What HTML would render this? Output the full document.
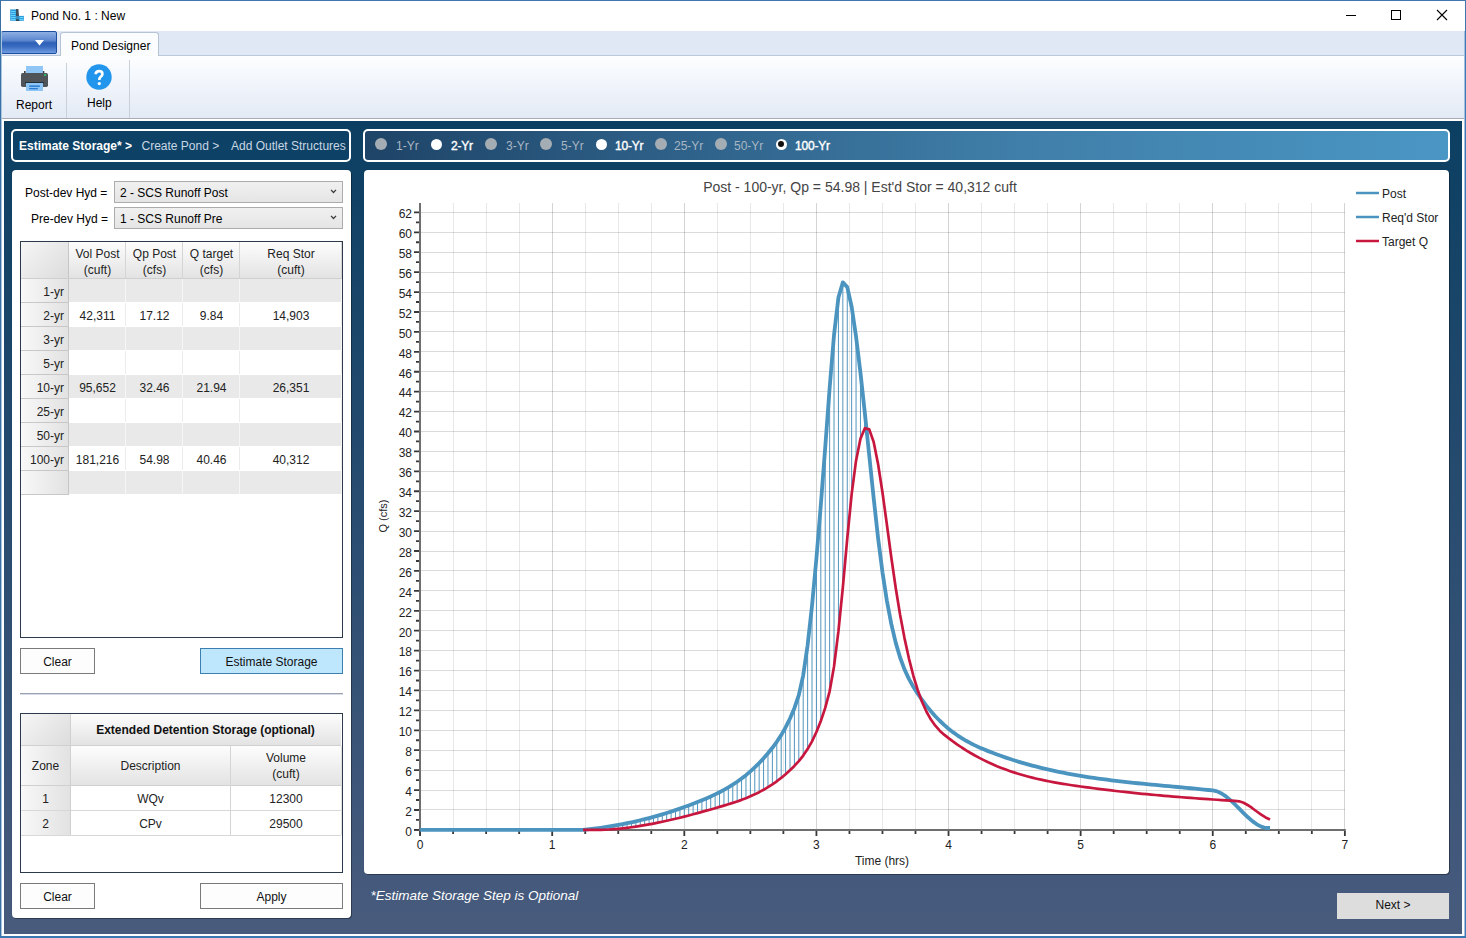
<!DOCTYPE html>
<html><head><meta charset="utf-8"><title>Pond Designer</title><style>
*{box-sizing:border-box;margin:0;padding:0}
html,body{width:1466px;height:938px;overflow:hidden;background:#fff;font-family:"Liberation Sans", sans-serif;font-size:12px;color:#000}
.a{position:absolute}
.t{position:absolute;white-space:pre;line-height:1}
</style></head>
<body>
<div class="a" style="left:0;top:0;width:1466px;height:938px;background:#fff"></div>
<svg class="a" style="left:8px;top:7px" width="18" height="16" viewBox="0 0 18 16"><rect x="2.2" y="2.4" width="5.8" height="11.4" fill="#2a9ad8"/><rect x="3" y="4" width="4.6" height="1.1" fill="#66d2ff"/><rect x="3" y="6" width="4.6" height="1.1" fill="#66d2ff"/><rect x="3" y="8" width="4.6" height="1.1" fill="#66d2ff"/><rect x="3" y="10" width="4.6" height="1.1" fill="#66d2ff"/><rect x="3" y="12" width="4.6" height="1.1" fill="#66d2ff"/><path d="M8 2H10.4L11 9V13.8H8Z" fill="#3b4e5c"/><rect x="8" y="9" width="3" height="3.6" fill="#3a8ab8"/><rect x="8" y="12.6" width="3.9" height="1.2" fill="#22384a"/><rect x="10.9" y="8.9" width="5" height="4.9" fill="#2a9ad8"/><rect x="11.5" y="10" width="4" height="1.1" fill="#66d2ff"/><rect x="11.5" y="12" width="4" height="1.1" fill="#66d2ff"/></svg>
<div class="t" style="left:31px;top:10px;font-size:12px;color:#000">Pond No. 1 : New</div>
<div class="a" style="left:1346px;top:15px;width:10px;height:1px;background:#000"></div>
<div class="a" style="left:1391px;top:10px;width:10px;height:10px;border:1px solid #000"></div>
<svg class="a" style="left:1436px;top:9px" width="12" height="12" viewBox="0 0 12 12"><path d="M1 1L11 11M11 1L1 11" stroke="#000" stroke-width="1.1"/></svg>
<div class="a" style="left:1px;top:31px;width:1464px;height:25px;background:#dfe8f4;border-bottom:1px solid #b9c9dd"></div>
<div class="a" style="left:1px;top:31px;width:56px;height:23px;border:1px solid #1d4f9c;border-radius:2px;background:linear-gradient(#8eb0e4 0%,#5d87cf 40%,#2c5fb6 52%,#3a6cc2 70%,#6f9be0 100%)"></div>
<svg class="a" style="left:35px;top:40px" width="9" height="6" viewBox="0 0 9 6"><path d="M0 0H9L4.5 5.5Z" fill="#fff"/></svg>
<div class="a" style="left:60px;top:32px;width:99px;height:25px;border:1px solid #b6c3d4;border-bottom:none;border-radius:3px 3px 0 0;background:#fafcfe"></div>
<div class="t" style="left:71px;top:40px;font-size:12px">Pond Designer</div>
<div class="a" style="left:1px;top:56px;width:1464px;height:63px;background:linear-gradient(#fdfeff 0%,#f1f5fb 45%,#e3eaf5 100%);border-bottom:1px solid #a9adb3"></div>
<div class="a" style="left:66px;top:63px;width:1px;height:55px;background:#c8d0da"></div>
<div class="a" style="left:129px;top:60px;width:1px;height:58px;background:#c8d0da"></div>
<svg class="a" style="left:15px;top:60px" width="40" height="35" viewBox="0 0 40 35"><rect x="11" y="6" width="17" height="7" fill="#8fc6f5"/><rect x="9" y="11" width="1.6" height="2.5" fill="#3a3f44"/><rect x="27.9" y="11" width="1.4" height="2.5" fill="#3a3f44"/><path d="M7.5 13H31.3Q33 13 33 14.8V25.2Q33 27 31.3 27H7.5Q6 27 6 25.2V14.8Q6 13 7.5 13Z" fill="#4f5458"/><rect x="29" y="14" width="2.2" height="2" fill="#2fb36a"/><rect x="10" y="22" width="19" height="1.2" fill="#22303c"/><rect x="11" y="23" width="17" height="8" fill="#8fc6f5"/><rect x="14.2" y="25.4" width="10.6" height="1.5" fill="#2a7ad0"/><rect x="14.2" y="28" width="8.6" height="1.3" fill="#2a7ad0"/></svg>
<div class="t" style="left:16px;top:99px;font-size:12px">Report</div>
<svg class="a" style="left:86px;top:64px" width="26" height="26" viewBox="0 0 26 26"><circle cx="13" cy="13" r="12.7" fill="#2295ec"/><path d="M9.7 10.3Q9.7 7.1 13.1 7.1Q16.4 7.1 16.4 9.9Q16.4 11.6 14.6 12.8Q13.3 13.7 13.3 15.6V16" stroke="#fff" stroke-width="2.7" fill="none"/><circle cx="13.3" cy="19.6" r="1.65" fill="#fff"/></svg>
<div class="t" style="left:87px;top:97px;font-size:12px">Help</div>
<div class="a" style="left:0;top:0;width:1466px;height:938px;border:1px solid #3f78b0;border-left:1px solid #3a70a4"></div>
<div class="a" style="left:1px;top:31px;width:1px;height:906px;background:#a6c6e2"></div>
<div class="a" style="left:1464px;top:31px;width:1px;height:906px;background:#9fc0de"></div>
<div class="a" style="left:0;top:936px;width:1466px;height:2px;background:#3a78b4"></div>
<div class="a" style="left:4px;top:121px;width:1458px;height:813px;background:linear-gradient(#0b3f62 0%,#284c70 48%,#485b7d 100%)"></div>
<div class="a" style="left:11px;top:129px;width:340px;height:33px;border:2px solid #fff;border-radius:5px;background:#0d4266"></div>
<div class="t" style="left:19px;top:140px;font-size:12px;font-weight:bold;color:#fff">Estimate Storage* &gt;</div>
<div class="t" style="left:141.5px;top:140px;font-size:12px;color:#c9d6e3">Create Pond &gt;</div>
<div class="t" style="left:231px;top:140px;font-size:12px;color:#c9d6e3">Add Outlet Structures</div>
<div class="a" style="left:363px;top:129px;width:1087px;height:33px;border:2px solid #fff;border-radius:5px;background:linear-gradient(90deg,#1e4467 0%,#2f628a 30%,#3f7ea8 60%,#4a96c4 100%)"></div>
<div class="a" style="left:375px;top:138px;width:12px;height:12px;border-radius:50%;background:#a4acb4"></div>
<div class="t" style="left:396px;top:140px;font-size:12px;color:#a9b6c3">1-Yr</div>
<div class="a" style="left:430.5px;top:138.5px;width:11px;height:11px;border-radius:50%;background:#fff"></div>
<div class="t" style="left:451px;top:140px;font-size:12px;color:#fff;-webkit-text-stroke:0.4px #fff;letter-spacing:-0.2px">2-Yr</div>
<div class="a" style="left:485px;top:138px;width:12px;height:12px;border-radius:50%;background:#a4acb4"></div>
<div class="t" style="left:506px;top:140px;font-size:12px;color:#a9b6c3">3-Yr</div>
<div class="a" style="left:540px;top:138px;width:12px;height:12px;border-radius:50%;background:#a4acb4"></div>
<div class="t" style="left:561px;top:140px;font-size:12px;color:#a9b6c3">5-Yr</div>
<div class="a" style="left:595.5px;top:138.5px;width:11px;height:11px;border-radius:50%;background:#fff"></div>
<div class="t" style="left:615px;top:140px;font-size:12px;color:#fff;-webkit-text-stroke:0.4px #fff;letter-spacing:-0.2px">10-Yr</div>
<div class="a" style="left:655px;top:138px;width:12px;height:12px;border-radius:50%;background:#a4acb4"></div>
<div class="t" style="left:674px;top:140px;font-size:12px;color:#a9b6c3">25-Yr</div>
<div class="a" style="left:715px;top:138px;width:12px;height:12px;border-radius:50%;background:#a4acb4"></div>
<div class="t" style="left:734px;top:140px;font-size:12px;color:#a9b6c3">50-Yr</div>
<div class="a" style="left:775.5px;top:138.5px;width:11px;height:11px;border-radius:50%;background:#fff"></div>
<div class="a" style="left:778px;top:141px;width:6px;height:6px;border-radius:50%;background:#111"></div>
<div class="t" style="left:795px;top:140px;font-size:12px;color:#fff;-webkit-text-stroke:0.4px #fff;letter-spacing:-0.2px">100-Yr</div>
<div class="a" style="left:12px;top:170px;width:339px;height:748px;background:#fff;border-radius:4px;box-shadow:1px 1px 0 0 rgba(0,0,0,0.33),0 0 1px 0 rgba(0,0,0,0.3)"></div>
<div class="a" style="left:364px;top:170px;width:1085px;height:704px;background:#fff;border-radius:4px;box-shadow:1px 1px 0 0 rgba(0,0,0,0.33),0 0 1px 0 rgba(0,0,0,0.3)"></div>
<div class="t" style="left:25px;top:187px;font-size:12px">Post-dev Hyd =</div>
<div class="t" style="left:31px;top:213px;font-size:12px">Pre-dev Hyd =</div>
<div class="a" style="left:114px;top:181px;width:229px;height:22px;border:1px solid #acacac;background:linear-gradient(#f0f0f0,#e5e5e5)"></div>
<div class="t" style="left:120px;top:187px;font-size:12px">2 - SCS Runoff Post</div>
<svg class="a" style="left:330px;top:189px" width="7" height="5" viewBox="0 0 7 5"><path d="M1 0.9L3.5 3.5L6 0.9" stroke="#3a3a3a" stroke-width="1.25" fill="none"/></svg>
<div class="a" style="left:114px;top:207px;width:229px;height:22px;border:1px solid #acacac;background:linear-gradient(#f0f0f0,#e5e5e5)"></div>
<div class="t" style="left:120px;top:213px;font-size:12px">1 - SCS Runoff Pre</div>
<svg class="a" style="left:330px;top:215px" width="7" height="5" viewBox="0 0 7 5"><path d="M1 0.9L3.5 3.5L6 0.9" stroke="#3a3a3a" stroke-width="1.25" fill="none"/></svg>
<div class="a" style="left:20px;top:241px;width:323px;height:397px;border:1px solid #2c3b4b;background:#fff"></div>
<div class="a" style="left:21px;top:242px;width:47px;height:36px;background:linear-gradient(135deg,#f6f6f6,#dcdcdc)"></div>
<div class="a" style="left:68px;top:242px;width:1px;height:253px;background:#c6c6c6"></div>
<div class="a" style="left:69px;top:242px;width:57px;height:36px;background:linear-gradient(#fdfdfd,#e3e3e3);border-right:1px solid #d5d5d5"></div>
<div class="a" style="left:69px;top:246px;width:57px;text-align:center;line-height:16px;font-size:12px;color:#222">Vol Post<br>(cuft)</div>
<div class="a" style="left:126px;top:242px;width:57px;height:36px;background:linear-gradient(#fdfdfd,#e3e3e3);border-right:1px solid #d5d5d5"></div>
<div class="a" style="left:126px;top:246px;width:57px;text-align:center;line-height:16px;font-size:12px;color:#222">Qp Post<br>(cfs)</div>
<div class="a" style="left:183px;top:242px;width:57px;height:36px;background:linear-gradient(#fdfdfd,#e3e3e3);border-right:1px solid #d5d5d5"></div>
<div class="a" style="left:183px;top:246px;width:57px;text-align:center;line-height:16px;font-size:12px;color:#222">Q target<br>(cfs)</div>
<div class="a" style="left:240px;top:242px;width:102px;height:36px;background:linear-gradient(#fdfdfd,#e3e3e3);border-right:1px solid #d5d5d5"></div>
<div class="a" style="left:240px;top:246px;width:102px;text-align:center;line-height:16px;font-size:12px;color:#222">Req Stor<br>(cuft)</div>
<div class="a" style="left:21px;top:278px;width:321px;height:1px;background:#cfcfcf"></div>
<div class="a" style="left:21px;top:279px;width:47px;height:23px;background:linear-gradient(90deg,#f8f8f8,#e2e2e2)"></div>
<div class="a" style="left:21px;top:302px;width:47px;height:1px;background:#c8c8c8"></div>
<div class="t" style="left:21px;top:286px;width:43px;text-align:right;font-size:12px;color:#222">1-yr</div>
<div class="a" style="left:69px;top:279px;width:57px;height:23px;background:#e9e9e9;border-right:1px solid #f6f6f6"></div>
<div class="a" style="left:126px;top:279px;width:57px;height:23px;background:#e9e9e9;border-right:1px solid #f6f6f6"></div>
<div class="a" style="left:183px;top:279px;width:57px;height:23px;background:#e9e9e9;border-right:1px solid #f6f6f6"></div>
<div class="a" style="left:240px;top:279px;width:102px;height:23px;background:#e9e9e9;border-right:1px solid #f6f6f6"></div>
<div class="a" style="left:21px;top:303px;width:47px;height:23px;background:linear-gradient(90deg,#f8f8f8,#e2e2e2)"></div>
<div class="a" style="left:21px;top:326px;width:47px;height:1px;background:#c8c8c8"></div>
<div class="t" style="left:21px;top:310px;width:43px;text-align:right;font-size:12px;color:#222">2-yr</div>
<div class="a" style="left:69px;top:303px;width:57px;height:23px;background:#ffffff;border-right:1px solid #ececec"></div>
<div class="t" style="left:69px;top:310px;width:57px;text-align:center;font-size:12px;color:#222">42,311</div>
<div class="a" style="left:126px;top:303px;width:57px;height:23px;background:#ffffff;border-right:1px solid #ececec"></div>
<div class="t" style="left:126px;top:310px;width:57px;text-align:center;font-size:12px;color:#222">17.12</div>
<div class="a" style="left:183px;top:303px;width:57px;height:23px;background:#ffffff;border-right:1px solid #ececec"></div>
<div class="t" style="left:183px;top:310px;width:57px;text-align:center;font-size:12px;color:#222">9.84</div>
<div class="a" style="left:240px;top:303px;width:102px;height:23px;background:#ffffff;border-right:1px solid #ececec"></div>
<div class="t" style="left:240px;top:310px;width:102px;text-align:center;font-size:12px;color:#222">14,903</div>
<div class="a" style="left:21px;top:327px;width:47px;height:23px;background:linear-gradient(90deg,#f8f8f8,#e2e2e2)"></div>
<div class="a" style="left:21px;top:350px;width:47px;height:1px;background:#c8c8c8"></div>
<div class="t" style="left:21px;top:334px;width:43px;text-align:right;font-size:12px;color:#222">3-yr</div>
<div class="a" style="left:69px;top:327px;width:57px;height:23px;background:#e9e9e9;border-right:1px solid #f6f6f6"></div>
<div class="a" style="left:126px;top:327px;width:57px;height:23px;background:#e9e9e9;border-right:1px solid #f6f6f6"></div>
<div class="a" style="left:183px;top:327px;width:57px;height:23px;background:#e9e9e9;border-right:1px solid #f6f6f6"></div>
<div class="a" style="left:240px;top:327px;width:102px;height:23px;background:#e9e9e9;border-right:1px solid #f6f6f6"></div>
<div class="a" style="left:21px;top:351px;width:47px;height:23px;background:linear-gradient(90deg,#f8f8f8,#e2e2e2)"></div>
<div class="a" style="left:21px;top:374px;width:47px;height:1px;background:#c8c8c8"></div>
<div class="t" style="left:21px;top:358px;width:43px;text-align:right;font-size:12px;color:#222">5-yr</div>
<div class="a" style="left:69px;top:351px;width:57px;height:23px;background:#ffffff;border-right:1px solid #ececec"></div>
<div class="a" style="left:126px;top:351px;width:57px;height:23px;background:#ffffff;border-right:1px solid #ececec"></div>
<div class="a" style="left:183px;top:351px;width:57px;height:23px;background:#ffffff;border-right:1px solid #ececec"></div>
<div class="a" style="left:240px;top:351px;width:102px;height:23px;background:#ffffff;border-right:1px solid #ececec"></div>
<div class="a" style="left:21px;top:375px;width:47px;height:23px;background:linear-gradient(90deg,#f8f8f8,#e2e2e2)"></div>
<div class="a" style="left:21px;top:398px;width:47px;height:1px;background:#c8c8c8"></div>
<div class="t" style="left:21px;top:382px;width:43px;text-align:right;font-size:12px;color:#222">10-yr</div>
<div class="a" style="left:69px;top:375px;width:57px;height:23px;background:#e9e9e9;border-right:1px solid #f6f6f6"></div>
<div class="t" style="left:69px;top:382px;width:57px;text-align:center;font-size:12px;color:#222">95,652</div>
<div class="a" style="left:126px;top:375px;width:57px;height:23px;background:#e9e9e9;border-right:1px solid #f6f6f6"></div>
<div class="t" style="left:126px;top:382px;width:57px;text-align:center;font-size:12px;color:#222">32.46</div>
<div class="a" style="left:183px;top:375px;width:57px;height:23px;background:#e9e9e9;border-right:1px solid #f6f6f6"></div>
<div class="t" style="left:183px;top:382px;width:57px;text-align:center;font-size:12px;color:#222">21.94</div>
<div class="a" style="left:240px;top:375px;width:102px;height:23px;background:#e9e9e9;border-right:1px solid #f6f6f6"></div>
<div class="t" style="left:240px;top:382px;width:102px;text-align:center;font-size:12px;color:#222">26,351</div>
<div class="a" style="left:21px;top:399px;width:47px;height:23px;background:linear-gradient(90deg,#f8f8f8,#e2e2e2)"></div>
<div class="a" style="left:21px;top:422px;width:47px;height:1px;background:#c8c8c8"></div>
<div class="t" style="left:21px;top:406px;width:43px;text-align:right;font-size:12px;color:#222">25-yr</div>
<div class="a" style="left:69px;top:399px;width:57px;height:23px;background:#ffffff;border-right:1px solid #ececec"></div>
<div class="a" style="left:126px;top:399px;width:57px;height:23px;background:#ffffff;border-right:1px solid #ececec"></div>
<div class="a" style="left:183px;top:399px;width:57px;height:23px;background:#ffffff;border-right:1px solid #ececec"></div>
<div class="a" style="left:240px;top:399px;width:102px;height:23px;background:#ffffff;border-right:1px solid #ececec"></div>
<div class="a" style="left:21px;top:423px;width:47px;height:23px;background:linear-gradient(90deg,#f8f8f8,#e2e2e2)"></div>
<div class="a" style="left:21px;top:446px;width:47px;height:1px;background:#c8c8c8"></div>
<div class="t" style="left:21px;top:430px;width:43px;text-align:right;font-size:12px;color:#222">50-yr</div>
<div class="a" style="left:69px;top:423px;width:57px;height:23px;background:#e9e9e9;border-right:1px solid #f6f6f6"></div>
<div class="a" style="left:126px;top:423px;width:57px;height:23px;background:#e9e9e9;border-right:1px solid #f6f6f6"></div>
<div class="a" style="left:183px;top:423px;width:57px;height:23px;background:#e9e9e9;border-right:1px solid #f6f6f6"></div>
<div class="a" style="left:240px;top:423px;width:102px;height:23px;background:#e9e9e9;border-right:1px solid #f6f6f6"></div>
<div class="a" style="left:21px;top:447px;width:47px;height:23px;background:linear-gradient(90deg,#f8f8f8,#e2e2e2)"></div>
<div class="a" style="left:21px;top:470px;width:47px;height:1px;background:#c8c8c8"></div>
<div class="t" style="left:21px;top:454px;width:43px;text-align:right;font-size:12px;color:#222">100-yr</div>
<div class="a" style="left:69px;top:447px;width:57px;height:23px;background:#ffffff;border-right:1px solid #ececec"></div>
<div class="t" style="left:69px;top:454px;width:57px;text-align:center;font-size:12px;color:#222">181,216</div>
<div class="a" style="left:126px;top:447px;width:57px;height:23px;background:#ffffff;border-right:1px solid #ececec"></div>
<div class="t" style="left:126px;top:454px;width:57px;text-align:center;font-size:12px;color:#222">54.98</div>
<div class="a" style="left:183px;top:447px;width:57px;height:23px;background:#ffffff;border-right:1px solid #ececec"></div>
<div class="t" style="left:183px;top:454px;width:57px;text-align:center;font-size:12px;color:#222">40.46</div>
<div class="a" style="left:240px;top:447px;width:102px;height:23px;background:#ffffff;border-right:1px solid #ececec"></div>
<div class="t" style="left:240px;top:454px;width:102px;text-align:center;font-size:12px;color:#222">40,312</div>
<div class="a" style="left:21px;top:471px;width:47px;height:23px;background:linear-gradient(90deg,#f8f8f8,#e2e2e2)"></div>
<div class="a" style="left:21px;top:494px;width:47px;height:1px;background:#c8c8c8"></div>
<div class="a" style="left:69px;top:471px;width:57px;height:23px;background:#e9e9e9;border-right:1px solid #f6f6f6"></div>
<div class="a" style="left:126px;top:471px;width:57px;height:23px;background:#e9e9e9;border-right:1px solid #f6f6f6"></div>
<div class="a" style="left:183px;top:471px;width:57px;height:23px;background:#e9e9e9;border-right:1px solid #f6f6f6"></div>
<div class="a" style="left:240px;top:471px;width:102px;height:23px;background:#e9e9e9;border-right:1px solid #f6f6f6"></div>
<div class="a" style="left:20px;top:648px;width:75px;height:26px;border:1px solid #7a7a7a;background:#fdfdfd"></div>
<div class="t" style="left:20px;top:656px;width:75px;text-align:center;font-size:12px;color:#111">Clear</div>
<div class="a" style="left:200px;top:648px;width:143px;height:26px;border:1px solid #3c7fb1;background:#bee6fd"></div>
<div class="t" style="left:200px;top:656px;width:143px;text-align:center;font-size:12px;color:#111">Estimate Storage</div>
<div class="a" style="left:20px;top:693px;width:323px;height:1px;background:#9ba1b0"></div>
<div class="a" style="left:20px;top:694px;width:323px;height:1px;background:#d9dde5"></div>
<div class="a" style="left:20px;top:713px;width:323px;height:160px;border:1px solid #2c3b4b;background:#fff"></div>
<div class="a" style="left:21px;top:714px;width:49px;height:31px;background:linear-gradient(135deg,#f6f6f6,#dcdcdc)"></div>
<div class="a" style="left:71px;top:714px;width:270px;height:31px;background:linear-gradient(#fdfdfd,#e3e3e3)"></div>
<div class="t" style="left:70px;top:724px;width:271px;text-align:center;font-size:12px;font-weight:bold;color:#111">Extended Detention Storage (optional)</div>
<div class="a" style="left:21px;top:745px;width:320px;height:1px;background:#d0d0d0"></div>
<div class="a" style="left:21px;top:746px;width:49px;height:39px;background:linear-gradient(90deg,#f8f8f8,#e2e2e2)"></div>
<div class="t" style="left:21px;top:760px;width:49px;text-align:center;font-size:12px;color:#222">Zone</div>
<div class="a" style="left:71px;top:746px;width:159px;height:39px;background:linear-gradient(#fdfdfd,#e3e3e3)"></div>
<div class="t" style="left:71px;top:760px;width:159px;text-align:center;font-size:12px;color:#222">Description</div>
<div class="a" style="left:231px;top:746px;width:110px;height:39px;background:linear-gradient(#fdfdfd,#e3e3e3)"></div>
<div class="a" style="left:231px;top:750px;width:110px;text-align:center;line-height:16px;font-size:12px;color:#222">Volume<br>(cuft)</div>
<div class="a" style="left:21px;top:785px;width:320px;height:1px;background:#d0d0d0"></div>
<div class="a" style="left:21px;top:786px;width:49px;height:24px;background:linear-gradient(90deg,#f8f8f8,#e2e2e2)"></div>
<div class="t" style="left:21px;top:793px;width:49px;text-align:center;font-size:12px;color:#222">1</div>
<div class="t" style="left:71px;top:793px;width:159px;text-align:center;font-size:12px;color:#222">WQv</div>
<div class="t" style="left:231px;top:793px;width:110px;text-align:center;font-size:12px;color:#222">12300</div>
<div class="a" style="left:21px;top:810px;width:320px;height:1px;background:#d8d8d8"></div>
<div class="a" style="left:21px;top:811px;width:49px;height:24px;background:linear-gradient(90deg,#f8f8f8,#e2e2e2)"></div>
<div class="t" style="left:21px;top:818px;width:49px;text-align:center;font-size:12px;color:#222">2</div>
<div class="t" style="left:71px;top:818px;width:159px;text-align:center;font-size:12px;color:#222">CPv</div>
<div class="t" style="left:231px;top:818px;width:110px;text-align:center;font-size:12px;color:#222">29500</div>
<div class="a" style="left:21px;top:835px;width:320px;height:1px;background:#d8d8d8"></div>
<div class="a" style="left:70px;top:714px;width:1px;height:121px;background:#d0d0d0"></div>
<div class="a" style="left:230px;top:746px;width:1px;height:89px;background:#d4d4d4"></div>
<div class="a" style="left:341px;top:746px;width:1px;height:89px;background:#e0e0e0"></div>
<div class="a" style="left:20px;top:883px;width:75px;height:26px;border:1px solid #7a7a7a;background:#fdfdfd"></div>
<div class="t" style="left:20px;top:891px;width:75px;text-align:center;font-size:12px;color:#111">Clear</div>
<div class="a" style="left:200px;top:883px;width:143px;height:26px;border:1px solid #7a7a7a;background:#fdfdfd"></div>
<div class="t" style="left:200px;top:891px;width:143px;text-align:center;font-size:12px;color:#111">Apply</div>
<svg class="a" style="left:0;top:0" width="1466" height="938" viewBox="0 0 1466 938">
<path d="M453.50,203V830 M486.50,203V830 M519.50,203V830 M585.50,203V830 M618.50,203V830 M651.50,203V830 M717.50,203V830 M750.50,203V830 M783.50,203V830 M849.50,203V830 M882.50,203V830 M915.50,203V830 M981.50,203V830 M1014.50,203V830 M1047.50,203V830 M1113.50,203V830 M1146.50,203V830 M1179.50,203V830 M1245.50,203V830 M1278.50,203V830 M1311.50,203V830" stroke="#000" stroke-opacity="0.09" stroke-width="1" fill="none"/>
<path d="M420,809.50H1344.86 M420,790.50H1344.86 M420,770.50H1344.86 M420,750.50H1344.86 M420,730.50H1344.86 M420,710.50H1344.86 M420,690.50H1344.86 M420,670.50H1344.86 M420,650.50H1344.86 M420,630.50H1344.86 M420,610.50H1344.86 M420,590.50H1344.86 M420,570.50H1344.86 M420,551.50H1344.86 M420,531.50H1344.86 M420,511.50H1344.86 M420,491.50H1344.86 M420,471.50H1344.86 M420,451.50H1344.86 M420,431.50H1344.86 M420,411.50H1344.86 M420,391.50H1344.86 M420,371.50H1344.86 M420,351.50H1344.86 M420,331.50H1344.86 M420,311.50H1344.86 M420,292.50H1344.86 M420,272.50H1344.86 M420,252.50H1344.86 M420,232.50H1344.86 M420,212.50H1344.86" stroke="#000" stroke-opacity="0.14" stroke-width="1" fill="none"/>
<path d="M552.50,203V830 M684.50,203V830 M816.50,203V830 M948.50,203V830 M1080.50,203V830 M1212.50,203V830 M1344.50,203V830" stroke="#000" stroke-opacity="0.17" stroke-width="1" fill="none"/>
<path d="M420,203V835 M414,830H1345.86" stroke="#6e6e6e" stroke-width="2" fill="none"/>
<path d="M414,829.90H419 M416,819.94H419 M414,809.98H419 M416,800.02H419 M414,790.06H419 M416,780.10H419 M414,770.14H419 M416,760.18H419 M414,750.22H419 M416,740.26H419 M414,730.30H419 M416,720.34H419 M414,710.38H419 M416,700.42H419 M414,690.46H419 M416,680.50H419 M414,670.54H419 M416,660.58H419 M414,650.62H419 M416,640.66H419 M414,630.70H419 M416,620.74H419 M414,610.78H419 M416,600.82H419 M414,590.86H419 M416,580.90H419 M414,570.94H419 M416,560.98H419 M414,551.02H419 M416,541.06H419 M414,531.10H419 M416,521.14H419 M414,511.18H419 M416,501.22H419 M414,491.26H419 M416,481.30H419 M414,471.34H419 M416,461.38H419 M414,451.42H419 M416,441.46H419 M414,431.50H419 M416,421.54H419 M414,411.58H419 M416,401.62H419 M414,391.66H419 M416,381.70H419 M414,371.74H419 M416,361.78H419 M414,351.82H419 M416,341.86H419 M414,331.90H419 M416,321.94H419 M414,311.98H419 M416,302.02H419 M414,292.06H419 M416,282.10H419 M414,272.14H419 M416,262.18H419 M414,252.22H419 M416,242.26H419 M414,232.30H419 M416,222.34H419 M414,212.38H419 M420.09,831V836 M453.12,831V834 M486.14,831V834 M519.17,831V834 M552.20,831V836 M585.23,831V834 M618.25,831V834 M651.28,831V834 M684.31,831V836 M717.34,831V834 M750.37,831V834 M783.39,831V834 M816.42,831V836 M849.45,831V834 M882.48,831V834 M915.50,831V834 M948.53,831V836 M981.56,831V834 M1014.59,831V834 M1047.61,831V834 M1080.64,831V836 M1113.67,831V834 M1146.69,831V834 M1179.72,831V834 M1212.75,831V836 M1245.78,831V834 M1278.81,831V834 M1311.83,831V834 M1344.86,831V836" stroke="#383838" stroke-width="1.8" fill="none"/>
<path d="M609.45,826.45V829.51 M613.85,825.71V829.19 M618.25,824.93V828.80 M622.66,824.09V828.35 M627.06,823.21V827.83 M631.47,822.28V827.26 M635.87,821.30V826.63 M640.27,820.26V825.94 M644.68,819.18V825.20 M649.08,818.04V824.41 M653.48,816.86V823.58 M657.89,815.62V822.69 M662.29,814.32V821.77 M666.70,812.98V820.80 M671.10,811.58V819.80 M675.50,810.12V818.76 M679.91,808.62V817.69 M684.31,807.05V816.58 M688.71,805.43V815.45 M693.12,803.76V814.29 M697.52,802.02V813.10 M701.92,800.23V811.90 M706.33,798.38V810.67 M710.73,796.44V809.43 M715.14,794.39V808.18 M719.54,792.21V806.91 M723.94,789.87V805.62 M728.35,787.36V804.29 M732.75,784.66V802.90 M737.15,781.73V801.43 M741.56,778.57V799.86 M745.96,775.14V798.16 M750.37,771.42V796.33 M754.77,767.40V794.34 M759.17,763.04V792.17 M763.58,758.34V789.80 M767.98,753.26V787.21 M772.38,747.79V784.38 M776.79,741.81V781.29 M781.19,735.09V777.93 M785.59,727.41V774.26 M790.00,718.51V770.27 M794.40,708.17V765.95 M798.81,695.11V761.15 M803.21,675.29V755.61 M807.61,645.25V749.09 M812.02,605.68V741.32 M816.42,558.35V732.04 M820.82,505.00V720.98 M825.23,447.40V707.89 M829.63,388.15V691.32 M834.03,334.96V666.49 M838.44,297.44V631.20 M842.84,282.39V587.44 M847.25,287.10V538.70 M851.65,306.76V494.18 M856.05,336.62V460.65 M860.46,372.84V438.65 M864.86,413.21V428.22" stroke="#4a8fbb" stroke-width="1" fill="none" opacity="0.95"/>
<path d="M420.09,829.90 L424.49,829.90 L428.90,829.90 L433.30,829.90 L437.70,829.90 L442.11,829.90 L446.51,829.90 L450.92,829.90 L455.32,829.90 L459.72,829.90 L464.13,829.90 L468.53,829.90 L472.93,829.90 L477.34,829.90 L481.74,829.90 L486.14,829.90 L490.55,829.90 L494.95,829.90 L499.36,829.90 L503.76,829.90 L508.16,829.90 L512.57,829.90 L516.97,829.90 L521.37,829.90 L525.78,829.90 L530.18,829.90 L534.59,829.90 L538.99,829.90 L543.39,829.90 L547.80,829.90 L552.20,829.90 L556.60,829.90 L561.01,829.90 L565.41,829.90 L569.81,829.90 L574.22,829.90 L578.62,829.90 L583.03,829.89 L587.43,829.43 L591.83,828.93 L596.24,828.38 L600.64,827.78 L605.04,827.14 L609.45,826.45 L613.85,825.71 L618.25,824.93 L622.66,824.09 L627.06,823.21 L631.47,822.28 L635.87,821.30 L640.27,820.26 L644.68,819.18 L649.08,818.04 L653.48,816.86 L657.89,815.62 L662.29,814.32 L666.70,812.98 L671.10,811.58 L675.50,810.12 L679.91,808.62 L684.31,807.05 L688.71,805.43 L693.12,803.76 L697.52,802.02 L701.92,800.23 L706.33,798.38 L710.73,796.44 L715.14,794.39 L719.54,792.21 L723.94,789.87 L728.35,787.36 L732.75,784.66 L737.15,781.73 L741.56,778.57 L745.96,775.14 L750.37,771.42 L754.77,767.40 L759.17,763.04 L763.58,758.34 L767.98,753.26 L772.38,747.79 L776.79,741.81 L781.19,735.09 L785.59,727.41 L790.00,718.51 L794.40,708.17 L798.81,695.11 L803.21,675.29 L807.61,645.25 L812.02,605.68 L816.42,558.35 L820.82,505.00 L825.23,447.40 L829.63,388.15 L834.03,334.96 L838.44,297.44 L842.84,282.39 L847.25,287.10 L851.65,306.76 L856.05,336.62 L860.46,372.84 L864.86,413.21 L869.26,455.65 L873.67,498.08 L878.07,537.95 L882.48,572.35 L886.88,600.74 L891.28,623.91 L895.69,642.61 L900.09,657.52 L904.49,669.38 L908.90,678.88 L913.30,686.73 L917.70,693.64 L922.11,700.01 L926.51,705.87 L930.92,711.27 L935.32,716.22 L939.72,720.75 L944.13,724.90 L948.53,728.69 L952.93,732.14 L957.34,735.29 L961.74,738.17 L966.14,740.79 L970.55,743.19 L974.95,745.40 L979.36,747.44 L983.76,749.34 L988.16,751.13 L992.57,752.84 L996.97,754.48 L1001.37,756.06 L1005.78,757.59 L1010.18,759.05 L1014.59,760.46 L1018.99,761.81 L1023.39,763.11 L1027.80,764.36 L1032.20,765.56 L1036.60,766.71 L1041.01,767.81 L1045.41,768.86 L1049.81,769.88 L1054.22,770.85 L1058.62,771.78 L1063.03,772.67 L1067.43,773.52 L1071.83,774.33 L1076.24,775.11 L1080.64,775.86 L1085.04,776.58 L1089.45,777.26 L1093.85,777.92 L1098.25,778.55 L1102.66,779.15 L1107.06,779.73 L1111.47,780.29 L1115.87,780.83 L1120.27,781.35 L1124.68,781.85 L1129.08,782.33 L1133.48,782.80 L1137.89,783.25 L1142.29,783.70 L1146.69,784.13 L1151.10,784.55 L1155.50,784.97 L1159.91,785.38 L1164.31,785.79 L1168.71,786.20 L1173.12,786.60 L1177.52,787.01 L1181.92,787.42 L1186.33,787.83 L1190.73,788.25 L1195.14,788.67 L1199.54,789.10 L1203.94,789.54 L1208.35,790.00 L1212.75,790.46 L1217.15,791.40 L1221.56,793.46 L1225.96,796.44 L1230.36,800.10 L1234.77,804.23 L1239.17,808.62 L1243.58,813.04 L1247.98,817.28 L1252.38,821.11 L1256.79,824.32 L1261.19,826.68 L1265.59,827.99 L1270.00,828.02" stroke="#4b94bf" stroke-width="3.8" fill="none" stroke-linejoin="round"/>
<path d="M583.03,829.90 L587.43,829.90 L591.83,829.90 L596.24,829.90 L600.64,829.90 L605.04,829.76 L609.45,829.51 L613.85,829.19 L618.25,828.80 L622.66,828.35 L627.06,827.83 L631.47,827.26 L635.87,826.63 L640.27,825.94 L644.68,825.20 L649.08,824.41 L653.48,823.58 L657.89,822.69 L662.29,821.77 L666.70,820.80 L671.10,819.80 L675.50,818.76 L679.91,817.69 L684.31,816.58 L688.71,815.45 L693.12,814.29 L697.52,813.10 L701.92,811.90 L706.33,810.67 L710.73,809.43 L715.14,808.18 L719.54,806.91 L723.94,805.62 L728.35,804.29 L732.75,802.90 L737.15,801.43 L741.56,799.86 L745.96,798.16 L750.37,796.33 L754.77,794.34 L759.17,792.17 L763.58,789.80 L767.98,787.21 L772.38,784.38 L776.79,781.29 L781.19,777.93 L785.59,774.26 L790.00,770.27 L794.40,765.95 L798.81,761.15 L803.21,755.61 L807.61,749.09 L812.02,741.32 L816.42,732.04 L820.82,720.98 L825.23,707.89 L829.63,691.32 L834.03,666.49 L838.44,631.20 L842.84,587.44 L847.25,538.70 L851.65,494.18 L856.05,460.65 L860.46,438.65 L864.86,428.22 L869.26,429.41 L873.67,442.02 L878.07,464.01 L882.48,492.48 L886.88,524.52 L891.28,557.23 L895.69,587.76 L900.09,614.66 L904.49,638.09 L908.90,658.30 L913.30,675.52 L917.70,690.01 L922.11,702.01 L926.51,711.77 L930.92,719.55 L935.32,725.72 L939.72,730.64 L944.13,734.66 L948.53,738.16 L952.93,741.43 L957.34,744.55 L961.74,747.50 L966.14,750.31 L970.55,752.97 L974.95,755.49 L979.36,757.88 L983.76,760.13 L988.16,762.26 L992.57,764.26 L996.97,766.15 L1001.37,767.92 L1005.78,769.59 L1010.18,771.15 L1014.59,772.62 L1018.99,774.00 L1023.39,775.29 L1027.80,776.50 L1032.20,777.63 L1036.60,778.69 L1041.01,779.69 L1045.41,780.62 L1049.81,781.50 L1054.22,782.32 L1058.62,783.10 L1063.03,783.84 L1067.43,784.54 L1071.83,785.22 L1076.24,785.87 L1080.64,786.49 L1085.04,787.10 L1089.45,787.70 L1093.85,788.28 L1098.25,788.85 L1102.66,789.40 L1107.06,789.94 L1111.47,790.46 L1115.87,790.98 L1120.27,791.47 L1124.68,791.96 L1129.08,792.43 L1133.48,792.90 L1137.89,793.35 L1142.29,793.79 L1146.69,794.21 L1151.10,794.63 L1155.50,795.03 L1159.91,795.43 L1164.31,795.82 L1168.71,796.19 L1173.12,796.56 L1177.52,796.92 L1181.92,797.26 L1186.33,797.60 L1190.73,797.94 L1195.14,798.26 L1199.54,798.57 L1203.94,798.88 L1208.35,799.19 L1212.75,799.48 L1217.15,799.77 L1221.56,800.05 L1225.96,800.33 L1230.36,800.60 L1234.77,800.86 L1239.17,801.29 L1243.58,802.78 L1247.98,805.21 L1252.38,808.22 L1256.79,811.49 L1261.19,814.67 L1265.59,817.42 L1270.00,819.41" stroke="#c8173f" stroke-width="2.7" fill="none" stroke-linejoin="round"/>
<text x="412" y="835.70" text-anchor="end" font-family="Liberation Sans" font-size="12" fill="#222">0</text>
<text x="412" y="815.78" text-anchor="end" font-family="Liberation Sans" font-size="12" fill="#222">2</text>
<text x="412" y="795.86" text-anchor="end" font-family="Liberation Sans" font-size="12" fill="#222">4</text>
<text x="412" y="775.94" text-anchor="end" font-family="Liberation Sans" font-size="12" fill="#222">6</text>
<text x="412" y="756.02" text-anchor="end" font-family="Liberation Sans" font-size="12" fill="#222">8</text>
<text x="412" y="736.10" text-anchor="end" font-family="Liberation Sans" font-size="12" fill="#222">10</text>
<text x="412" y="716.18" text-anchor="end" font-family="Liberation Sans" font-size="12" fill="#222">12</text>
<text x="412" y="696.26" text-anchor="end" font-family="Liberation Sans" font-size="12" fill="#222">14</text>
<text x="412" y="676.34" text-anchor="end" font-family="Liberation Sans" font-size="12" fill="#222">16</text>
<text x="412" y="656.42" text-anchor="end" font-family="Liberation Sans" font-size="12" fill="#222">18</text>
<text x="412" y="636.50" text-anchor="end" font-family="Liberation Sans" font-size="12" fill="#222">20</text>
<text x="412" y="616.58" text-anchor="end" font-family="Liberation Sans" font-size="12" fill="#222">22</text>
<text x="412" y="596.66" text-anchor="end" font-family="Liberation Sans" font-size="12" fill="#222">24</text>
<text x="412" y="576.74" text-anchor="end" font-family="Liberation Sans" font-size="12" fill="#222">26</text>
<text x="412" y="556.82" text-anchor="end" font-family="Liberation Sans" font-size="12" fill="#222">28</text>
<text x="412" y="536.90" text-anchor="end" font-family="Liberation Sans" font-size="12" fill="#222">30</text>
<text x="412" y="516.98" text-anchor="end" font-family="Liberation Sans" font-size="12" fill="#222">32</text>
<text x="412" y="497.06" text-anchor="end" font-family="Liberation Sans" font-size="12" fill="#222">34</text>
<text x="412" y="477.14" text-anchor="end" font-family="Liberation Sans" font-size="12" fill="#222">36</text>
<text x="412" y="457.22" text-anchor="end" font-family="Liberation Sans" font-size="12" fill="#222">38</text>
<text x="412" y="437.30" text-anchor="end" font-family="Liberation Sans" font-size="12" fill="#222">40</text>
<text x="412" y="417.38" text-anchor="end" font-family="Liberation Sans" font-size="12" fill="#222">42</text>
<text x="412" y="397.46" text-anchor="end" font-family="Liberation Sans" font-size="12" fill="#222">44</text>
<text x="412" y="377.54" text-anchor="end" font-family="Liberation Sans" font-size="12" fill="#222">46</text>
<text x="412" y="357.62" text-anchor="end" font-family="Liberation Sans" font-size="12" fill="#222">48</text>
<text x="412" y="337.70" text-anchor="end" font-family="Liberation Sans" font-size="12" fill="#222">50</text>
<text x="412" y="317.78" text-anchor="end" font-family="Liberation Sans" font-size="12" fill="#222">52</text>
<text x="412" y="297.86" text-anchor="end" font-family="Liberation Sans" font-size="12" fill="#222">54</text>
<text x="412" y="277.94" text-anchor="end" font-family="Liberation Sans" font-size="12" fill="#222">56</text>
<text x="412" y="258.02" text-anchor="end" font-family="Liberation Sans" font-size="12" fill="#222">58</text>
<text x="412" y="238.10" text-anchor="end" font-family="Liberation Sans" font-size="12" fill="#222">60</text>
<text x="412" y="218.18" text-anchor="end" font-family="Liberation Sans" font-size="12" fill="#222">62</text>
<text x="420.09" y="849" text-anchor="middle" font-family="Liberation Sans" font-size="12" fill="#222">0</text>
<text x="552.20" y="849" text-anchor="middle" font-family="Liberation Sans" font-size="12" fill="#222">1</text>
<text x="684.31" y="849" text-anchor="middle" font-family="Liberation Sans" font-size="12" fill="#222">2</text>
<text x="816.42" y="849" text-anchor="middle" font-family="Liberation Sans" font-size="12" fill="#222">3</text>
<text x="948.53" y="849" text-anchor="middle" font-family="Liberation Sans" font-size="12" fill="#222">4</text>
<text x="1080.64" y="849" text-anchor="middle" font-family="Liberation Sans" font-size="12" fill="#222">5</text>
<text x="1212.75" y="849" text-anchor="middle" font-family="Liberation Sans" font-size="12" fill="#222">6</text>
<text x="1344.86" y="849" text-anchor="middle" font-family="Liberation Sans" font-size="12" fill="#222">7</text>
<text x="882" y="865" text-anchor="middle" font-family="Liberation Sans" font-size="12" fill="#222">Time (hrs)</text>
<text transform="translate(387,516) rotate(-90)" text-anchor="middle" font-family="Liberation Sans" font-size="11" fill="#222">Q (cfs)</text>
<text x="860" y="192" text-anchor="middle" font-family="Liberation Sans" font-size="14" fill="#444">Post - 100-yr, Qp = 54.98 | Est'd Stor = 40,312 cuft</text>
<path d="M1356,193H1379" stroke="#4b94bf" stroke-width="2.5"/>
<text x="1382" y="198" font-family="Liberation Sans" font-size="12" fill="#222">Post</text>
<path d="M1356,217H1379" stroke="#4b94bf" stroke-width="2.5"/>
<text x="1382" y="222" font-family="Liberation Sans" font-size="12" fill="#222">Req'd Stor</text>
<path d="M1356,241H1379" stroke="#c8173f" stroke-width="2.5"/>
<text x="1382" y="246" font-family="Liberation Sans" font-size="12" fill="#222">Target Q</text>
</svg>
<div class="t" style="left:370.5px;top:889px;font-size:13.5px;font-style:italic;color:#fff">*Estimate Storage Step is Optional</div>
<div class="a" style="left:1337px;top:893px;width:112px;height:26px;background:#dddddd"></div>
<div class="t" style="left:1337px;top:899px;width:112px;text-align:center;font-size:12px;color:#111">Next &gt;</div>
</body></html>
